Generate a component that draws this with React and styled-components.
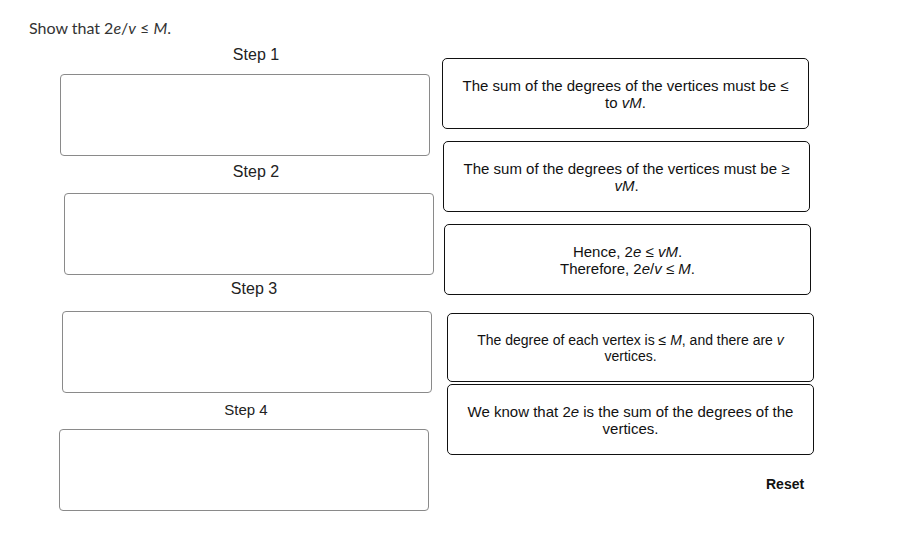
import React from 'react';
import styled, { createGlobalStyle } from 'styled-components';

const GlobalStyle = createGlobalStyle`
  html, body {
    margin: 0;
    padding: 0;
    background: #ffffff;
  }
  body {
    font-family: "Liberation Sans", Arial, sans-serif;
    color: #000;
  }
`;

const Page = styled.div`
  width: 905px;
  height: 534px;
  position: relative;
  overflow: hidden;
`;

const Prompt = styled.div`
  font-family: "Lato", "Open Sans", sans-serif;
  font-size: 16px;
  line-height: 18px;
  color: #333;
  padding: 19px 0 0 29px;
  height: 21px;

  i {
    font-style: italic;
  }
`;

const Board = styled.div`
  display: flex;
  align-items: flex-start;
`;

const StepColumn = styled.div`
  flex: 0 0 440px;
  display: flex;
  flex-direction: column;
`;

const StepLabel = styled.div`
  width: 370px;
  margin-left: ${({ $center }) => $center - 185}px;
  margin-top: ${({ $gap }) => $gap}px;
  text-align: center;
  font-size: ${({ $size }) => $size}px;
  line-height: 18px;
  color: #222;
`;

const DropZone = styled.div`
  box-sizing: border-box;
  width: 370px;
  height: 82px;
  margin-left: ${({ $x }) => $x}px;
  margin-top: ${({ $gap }) => $gap}px;
  border: 1px solid #8a8a8a;
  border-radius: 4px;
  background: #fff;
`;

const CardColumn = styled.div`
  flex: 1;
  display: flex;
  flex-direction: column;
`;

const Card = styled.div`
  box-sizing: border-box;
  width: 367px;
  height: ${({ $h }) => $h || 71}px;
  margin-left: ${({ $x }) => $x - 441}px;
  margin-top: ${({ $gap }) => $gap}px;
  border: 1px solid #111;
  border-radius: 5px;
  background: #fff;
  display: flex;
  align-items: center;
  justify-content: center;
  text-align: center;
  padding: 0 12px;
  font-size: ${({ $size }) => $size || 15}px;
  line-height: ${({ $size }) => ($size === 14 ? 16 : 17)}px;
  color: #111;

  i {
    font-style: italic;
  }
`;

const ResetButton = styled.button`
  align-self: flex-start;
  margin-left: 325px;
  margin-top: 20px;
  padding: 0;
  border: none;
  background: none;
  font-family: "Liberation Sans", Arial, sans-serif;
  font-weight: bold;
  font-size: 14px;
  line-height: 18px;
  color: #111;
  cursor: pointer;
`;

const steps = [
  { label: 'Step 1', center: 256, size: 16, labelGap: 6, boxX: 60, boxGap: 10 },
  { label: 'Step 2', center: 256, size: 16, labelGap: 7, boxX: 64, boxGap: 12 },
  { label: 'Step 3', center: 254, size: 16, labelGap: 5, boxX: 62, boxGap: 13 },
  { label: 'Step 4', center: 246, size: 15, labelGap: 8, boxX: 59, boxGap: 10 },
];

const cards = [
  {
    x: 442,
    gap: 18,
    body: (
      <span>
        The sum of the degrees of the vertices must be ≤<br />to <i>vM</i>.
      </span>
    ),
  },
  {
    x: 443,
    gap: 12,
    body: (
      <span>
        The sum of the degrees of the vertices must be ≥<br />
        <i>vM</i>.
      </span>
    ),
  },
  {
    x: 444,
    gap: 12,
    body: (
      <span>
        Hence, 2<i>e</i> ≤ <i>vM</i>.<br />
        Therefore, 2<i>e</i>/<i>v</i> ≤ <i>M</i>.
      </span>
    ),
  },
  {
    x: 447,
    gap: 18,
    size: 14,
    h: 69,
    body: (
      <span>
        The degree of each vertex is ≤ <i>M</i>, and there are <i>v</i>
        <br />
        vertices.
      </span>
    ),
  },
  {
    x: 447,
    gap: 2,
    body: (
      <span>
        We know that 2<i>e</i> is the sum of the degrees of the
        <br />
        vertices.
      </span>
    ),
  },
];

const App = () => {
  return (
    <Page>
      <GlobalStyle />
      <Prompt>
        Show that 2<i>e</i>/<i>v</i> ≤ <i>M</i>.
      </Prompt>
      <Board>
        <StepColumn>
          {steps.map((s) => (
            <React.Fragment key={s.label}>
              <StepLabel $center={s.center} $size={s.size} $gap={s.labelGap}>
                {s.label}
              </StepLabel>
              <DropZone $x={s.boxX} $gap={s.boxGap} />
            </React.Fragment>
          ))}
        </StepColumn>
        <CardColumn>
          {cards.map((c, i) => (
            <Card key={i} $x={c.x} $gap={c.gap} $size={c.size} $h={c.h}>
              {c.body}
            </Card>
          ))}
          <ResetButton>Reset</ResetButton>
        </CardColumn>
      </Board>
    </Page>
  );
};

export default App;
